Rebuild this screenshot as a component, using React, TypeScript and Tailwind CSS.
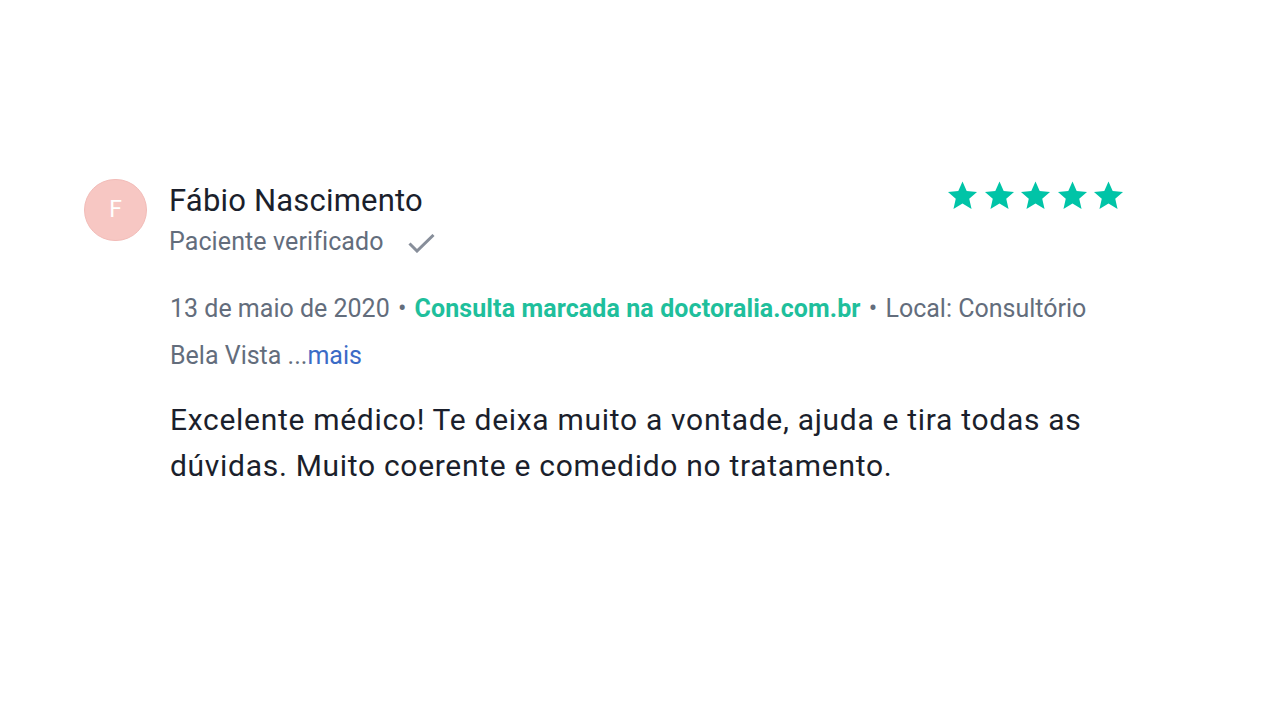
import React from "react";

const Star = () => (
  <svg width="33" height="33" viewBox="0 0 24 24" fill="#00c4a7">
    <path d="M12 1.8l3.05 6.9 7.5.7-5.65 5 1.68 7.37L12 17.9l-6.58 3.87L7.1 14.4 1.45 9.4l7.5-.7z" />
  </svg>
);

export default function App() {
  return (
    <div className="w-[1280px] h-[720px] bg-white" style={{ fontFamily: "Roboto, sans-serif" }}>
      <div className="flex pt-[179px] pl-[84px]">
        <div className="w-[63px] h-[62px] rounded-full bg-[#f7c7c3] border border-[#f2bcb8] flex items-center justify-center text-white text-[23px] shrink-0">
          F
        </div>
        <div className="ml-[23px] w-[953px] -mt-[1px]">
          <div className="flex justify-between items-start">
            <div>
              <div className="text-[31px] leading-[44px] tracking-[0.2px] text-[#1b1f2c] mt-[1px] -ml-[1px]">Fábio Nascimento</div>
              <div className="flex items-center text-[25px] leading-[40px] text-[#636d7c] -mt-[1px] -ml-[1px]">
                <span className="tracking-[0.1px]">Paciente verificado</span>
                <svg className="ml-[24px] mt-[3px]" width="27" height="19" viewBox="0 0 27 19" fill="none" stroke="#878e9a" strokeWidth="3">
                  <path d="M1.5 9.5l7.5 7.5L25.5 1" />
                </svg>
              </div>
            </div>
            <div className="flex gap-[3.5px] mt-[1px] mr-[-2px]">
              <Star />
              <Star />
              <Star />
              <Star />
              <Star />
            </div>
          </div>
          <div className="mt-[23px] text-[25px] leading-[47px] text-[#636d7c]">
            13 de maio de 2020 <span className="mx-[2px]">•</span>{" "}
            <span className="font-bold tracking-[0.1px] text-[#1fbf9c]">Consulta marcada na doctoralia.com.br</span>{" "}
            <span className="mx-[2px]">•</span> Local: Consultório Bela Vista ...<span className="text-[#3b6bc6]">mais</span>
          </div>
          <div className="mt-[18px] text-[30px] leading-[46px] tracking-[0.7px] text-[#1b1f2c]">
            Excelente médico! Te deixa muito a vontade, ajuda e tira todas as dúvidas. Muito coerente e comedido no tratamento.
          </div>
        </div>
      </div>
    </div>
  );
}
